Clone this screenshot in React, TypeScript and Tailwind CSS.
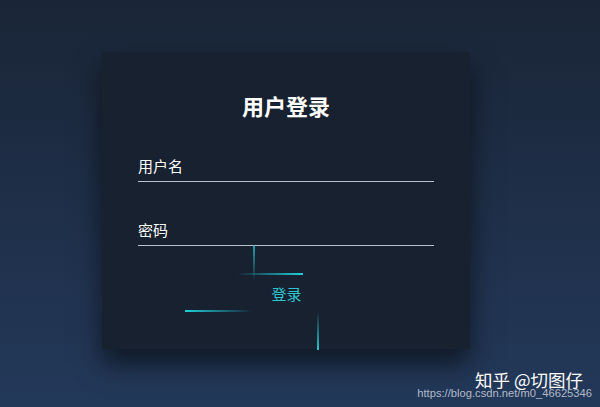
import React from "react";

export default function App() {
  const cjk = { fontFamily: '"Noto Sans CJK SC", "Noto Sans", sans-serif' };
  return (
    <div
      className="relative w-full h-[407px] overflow-hidden bg-gradient-to-b from-[#1a2537] to-[#23395a] pt-[52px] pl-[102px]"
      style={cjk}
    >
      <div className="relative w-[368px] h-[297px] bg-[#172130] shadow-[0_15px_25px_rgba(0,0,0,0.55)] pt-[38px] px-[36px] flex flex-col">
        <h2 className="text-center text-white font-bold text-[22px] leading-[30px]">用户登录</h2>
        <div className="mt-[36px] border-b border-[#b9c2c8] pb-[5px]">
          <div className="text-[15px] leading-[20px] text-white">用户名</div>
        </div>
        <div className="mt-[38px] border-b border-[#b9c2c8] pb-[5px]">
          <div className="text-[15px] leading-[20px] text-white">密码</div>
        </div>
        <div className="mt-[38px] flex justify-center">
          <span className="text-[15px] leading-[20px] text-[#2fc4cf] pl-[1px]">登录</span>
        </div>

        {/* animated border lines */}
        <span className="absolute left-[151px] top-[193px] w-[1.5px] h-[36px] bg-gradient-to-b from-[#2cc3cf] to-transparent opacity-80" />
        <span className="absolute left-[135px] top-[221px] w-[66px] h-[2px] bg-gradient-to-r from-transparent to-[#1fd0dc]" />
        <span className="absolute left-[83px] top-[258px] w-[68px] h-[2px] bg-gradient-to-l from-transparent to-[#1fd0dc]" />
        <span className="absolute left-[215px] top-[260px] w-[2px] h-[38px] bg-gradient-to-b from-transparent to-[#2ac6d2]" />
      </div>

      {/* watermarks */}
      <div className="absolute right-[17px] top-[369px] text-[17.5px] leading-[22px] text-white">知乎 @切图仔</div>
      <div
        className="absolute right-[8px] top-[386px] text-[11.2px] leading-[15px] text-[#d8dde4]/80"
        style={{ fontFamily: '"Liberation Sans", Arial, sans-serif' }}
      >
        https://blog.csdn.net/m0_46625346
      </div>
    </div>
  );
}
